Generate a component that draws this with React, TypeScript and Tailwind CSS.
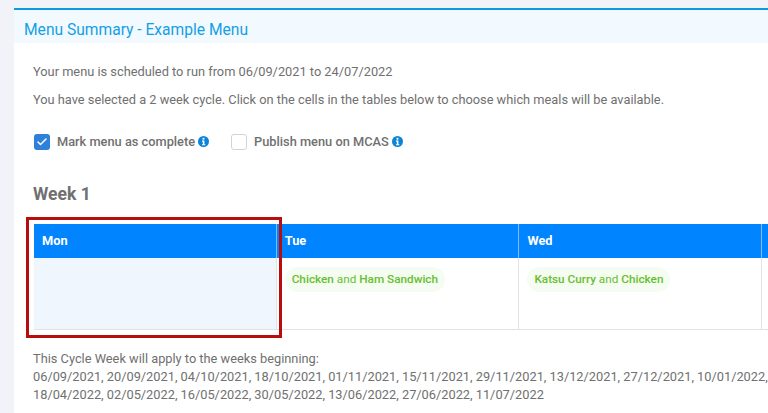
import { Check } from 'lucide-react'

const dayCols = [
  { name: 'Mon', parts: null, selected: true },
  {
    name: 'Tue',
    parts: [['Chicken', true], [' and ', false], ['Ham Sandwich', true]],
    selected: false,
  },
  {
    name: 'Wed',
    parts: [['Katsu Curry', true], [' and ', false], ['Chicken', true]],
    selected: false,
  },
  { name: '', parts: null, selected: false },
] as const

function InfoDot() {
  return (
    <svg viewBox="0 0 12 12" className="mb-[2px] ml-[3px] h-[11px] w-[11px]">
      <circle cx="6" cy="6" r="6" fill="#0b84d8" />
      <rect x="5" y="2" width="2" height="2" fill="#ffffff" />
      <path d="M4.3 5h2.7v4h1v1.2H4.3V9h1V6.2h-1z" fill="#ffffff" />
    </svg>
  )
}

export default function App() {
  return (
    <div className="h-[413px] w-[768px] overflow-hidden bg-[#f1f3f8] pl-[14px] pt-2 font-['Roboto',sans-serif] text-[12.8px] text-[#707070]">
      <div className="h-[405px] w-[754px] overflow-hidden border-t-2 border-[#0b9be3] bg-white">
        <div className="flex h-[33px] items-center bg-[#f3faff] pl-[10px] pt-2 text-[15.6px] text-[#12a0e6]">
          Menu Summary - Example Menu
        </div>

        <div className="pl-[19px] pt-[22px]">
          <p className="h-[14px] leading-[14px]">Your menu is scheduled to run from 06/09/2021 to 24/07/2022</p>
          <p className="mt-[14px] h-[14px] whitespace-nowrap leading-[14px]">
            You have selected a 2 week cycle. Click on the cells in the tables below to choose which meals will be available.
          </p>

          <div className="mt-[27px] flex h-4 items-center font-medium">
            <span className="ml-px flex h-4 w-4 items-center justify-center rounded-[3px] bg-[#2f80d8]">
              <Check size={12} strokeWidth={3} color="#ffffff" />
            </span>
            <span className="ml-[7px]">Mark menu as complete</span>
            <InfoDot />
            <span className="ml-[22px] h-4 w-4 rounded-[3px] border border-[#d4d4d4] bg-white" />
            <span className="ml-[7px]">Publish menu on MCAS</span>
            <InfoDot />
          </div>

          <h2 className="mt-[35px] text-[17.5px] leading-[19px] font-bold text-[#707070]">Week 1</h2>

          <div className="relative mt-[20px] ml-px w-[780px]">
            <div className="flex">
              {dayCols.map((col, idx) => (
                <div key={idx} className="w-[242.7px] shrink-0">
                  <div className="flex h-[34px] items-center border-r border-[#7dbdff] bg-[#0084ff] pl-2 font-bold text-white">
                    {col.name}
                  </div>
                  <div className={`h-[72px] border-r border-b border-[#e2e2e2] pl-2 pt-[9px] ${col.selected ? 'bg-[#eff6fd]' : 'bg-white'}`}>
                    {col.parts && (
                      <span className="inline-flex h-[25px] items-center rounded-[13px] bg-[#f5fcf1] px-[7px] text-[11.75px] font-normal text-[#66c02d]">
                        {col.parts.map(([text, strong], i) => (
                          <span key={i} className={strong ? 'font-medium whitespace-pre' : 'whitespace-pre'}>{text}</span>
                        ))}
                      </span>
                    )}
                  </div>
                </div>
              ))}
            </div>
            <div className="absolute top-[-7px] left-[-8px] h-[121px] w-[256px] border-[3px] border-[#b80d0d]" />
          </div>

          <div className="mt-[20px] whitespace-nowrap leading-[18px]">
            <p>This Cycle Week will apply to the weeks beginning:</p>
            <p>06/09/2021, 20/09/2021, 04/10/2021, 18/10/2021, 01/11/2021, 15/11/2021, 29/11/2021, 13/12/2021, 27/12/2021, 10/01/2022,</p>
            <p>18/04/2022, 02/05/2022, 16/05/2022, 30/05/2022, 13/06/2022, 27/06/2022, 11/07/2022</p>
          </div>
        </div>
      </div>
    </div>
  )
}
